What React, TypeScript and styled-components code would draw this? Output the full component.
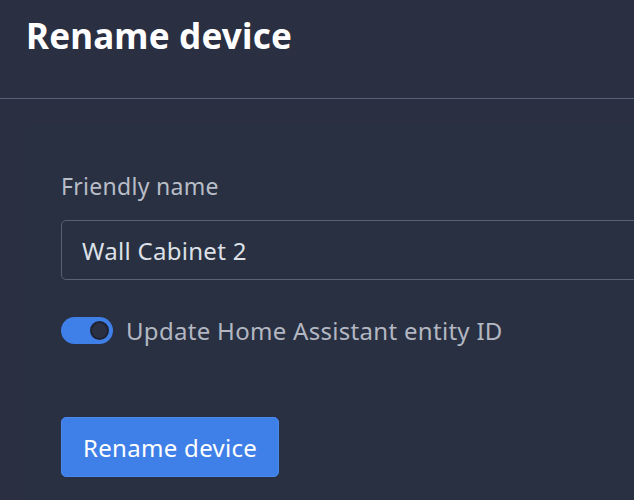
import React from 'react';
import styled, { createGlobalStyle } from 'styled-components';

const GlobalStyle = createGlobalStyle`
  html, body {
    margin: 0;
    padding: 0;
    background: #2a3042;
    overflow: hidden;
  }
  body {
    font-family: "Noto Sans", "Open Sans", sans-serif;
  }
`;

const Page = styled.div`
  width: 634px;
  height: 500px;
  background: #2a3042;
  overflow: hidden;
`;

const Header = styled.header`
  height: 99px;
  border-bottom: 1px solid #5b6174;
  padding: 0 0 0 26px;
  box-sizing: border-box;
`;

const Title = styled.h1`
  margin: 0;
  padding-top: 12px;
  font-size: 35px;
  font-weight: 700;
  color: #ffffff;
  letter-spacing: 0.2px;
`;

const Body = styled.main`
  padding: 25px 0 0 25px;
`;

const Panel = styled.section`
  background: #283042;
  padding: 47px 0 40px 36px;
  display: flex;
  flex-direction: column;
`;

const Label = styled.label`
  font-size: 23px;
  letter-spacing: 0.3px;
  color: #b9bdc7;
  line-height: 30px;
  margin-bottom: 19px;
`;

const Input = styled.input`
  height: 60px;
  width: 620px;
  box-sizing: border-box;
  background: transparent;
  border: 1px solid #5b6172;
  border-radius: 5px;
  padding: 0 20px;
  font-family: inherit;
  font-size: 24px;
  letter-spacing: 0.3px;
  color: #dde0e6;
  outline: none;
`;

const ToggleRow = styled.div`
  display: flex;
  align-items: center;
  gap: 13px;
  margin-top: 34px;
`;

const Switch = styled.span<{ on: boolean }>`
  position: relative;
  width: 52px;
  height: 27px;
  border-radius: 14px;
  background: ${p => (p.on ? '#3f7fe8' : '#4a5060')};
  flex-shrink: 0;
`;

const Knob = styled.span`
  position: absolute;
  right: 4px;
  top: 4px;
  width: 15px;
  height: 15px;
  border-radius: 50%;
  background: #2a3042;
  border: 2px solid #1e2230;
`;

const ToggleText = styled.span`
  font-size: 24px;
  letter-spacing: 0.3px;
  color: #b3b7c1;
`;

const Button = styled.button`
  align-self: flex-start;
  margin-top: 70px;
  height: 60px;
  padding: 0 21px;
  background: #3f80e8;
  border: 1px solid #4a8af0;
  border-radius: 5px;
  color: #ffffff;
  font-family: inherit;
  font-size: 24px;
  letter-spacing: 0.3px;
`;

export default function App() {
  return (
    <Page>
      <GlobalStyle />
      <Header>
        <Title>Rename device</Title>
      </Header>
      <Body>
        <Panel>
          <Label>Friendly name</Label>
          <Input defaultValue="Wall Cabinet 2" />
          <ToggleRow>
            <Switch on>
              <Knob />
            </Switch>
            <ToggleText>Update Home Assistant entity ID</ToggleText>
          </ToggleRow>
          <Button>Rename device</Button>
        </Panel>
      </Body>
    </Page>
  );
}
